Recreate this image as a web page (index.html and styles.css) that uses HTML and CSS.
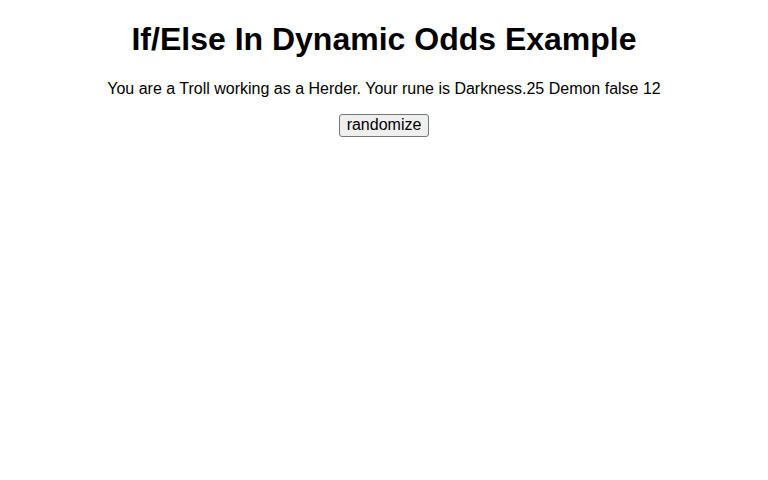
FILE: index.html
```html
<!DOCTYPE html>
<html lang="en">
<head>
    <meta charset="utf-8">
    <meta name="viewport" content="width=device-width, initial-scale=1.0">
    <title>If/Else In Dynamic Odds Example</title>
    <link rel="stylesheet" href="styles.css">
</head>
<body>

    <div class="root">
        <h1>If/Else In Dynamic Odds Example</h1>
        <p class="output">You are a Troll working as a Herder. Your rune is Darkness.25 Demon false 12</p>
        <button type="button" class="randomize">randomize</button>
    </div>

</body>
</html>
```

FILE: styles.css
```css
body {
    margin: 0;
    font-family: "Liberation Sans", Arial, sans-serif;
    color: #000;
    background: #fff;
}

.root {
    text-align: center;
}

.randomize {
    font-family: "Liberation Sans", Arial, sans-serif;
    font-size: 16px;
    padding: 1px 7px 2px;
    border: solid 1px #767676;
    border-radius: 3px;
    background-color: #efefef;
    color: #000;
}
```
